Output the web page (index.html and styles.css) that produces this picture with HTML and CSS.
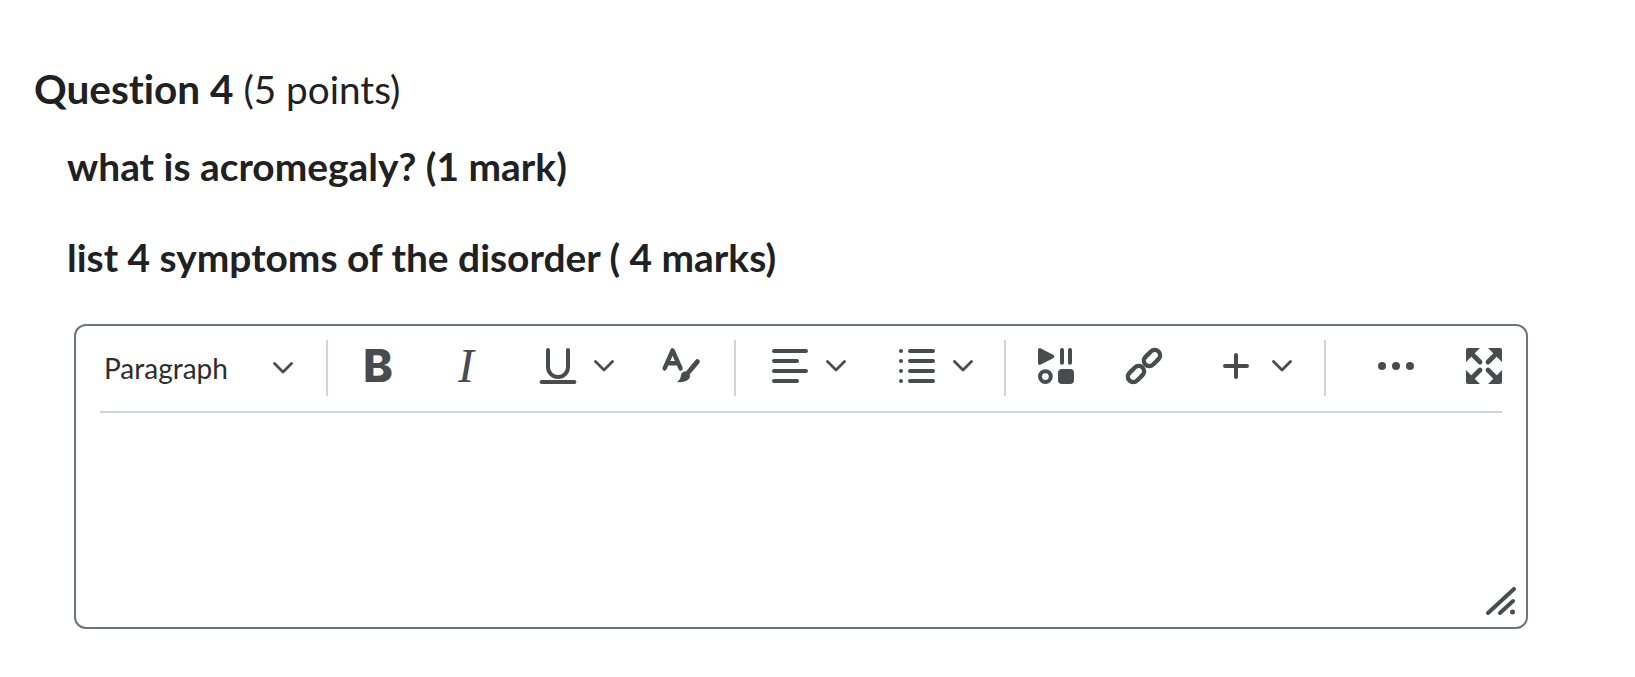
FILE: index.html
```html
<!DOCTYPE html>
<html lang="en">

<head>
    <meta charset="UTF-8">
    <title>Question 4</title>
    <link rel="stylesheet" href="styles.css">
</head>

<body>
    <h2 class="qTitle">Question 4 <span class="qPoints">(5 points)</span></h2>

    <div class="qBody">
        <p class="qText">what is acromegaly? (1 mark)</p>
        <p class="qText">list 4 symptoms of the disorder ( 4 marks)</p>
    </div>

    <div class="editor">
        <div class="toolbar">
            <div class="format">
                <span>Paragraph</span>
                <svg class="chev" viewBox="0 0 20 12"><path d="M1.5 1.5 10 10l8.5-8.5" /></svg>
            </div>
            <span class="sep"></span>

            <div class="tool"><span class="boldMark">B</span></div>
            <div class="tool"><span class="italicMark">I</span></div>
            <div class="tool tool-menu">
                <svg class="icon" viewBox="0 0 18 18"><path class="line" d="M4 1v8.5a5 5 0 0 0 10 0V1M0.8 17h16.4" /></svg>
                <svg class="chev" viewBox="0 0 20 12"><path d="M1.5 1.5 10 10l8.5-8.5" /></svg>
            </div>
            <div class="tool">
                <svg class="icon" viewBox="0 0 18 18">
                    <path class="line brushA" d="M.8 10.200 4.800 1.200l4 9M2.200 7.600h5.200" />
                    <path class="line heavy" d="M17.200 6.800 12 13" />
                    <path class="solid" d="M10 12c1-.4 2.200-.2 3 .7.800 1 .6 2.300-.3 3.100-1.300 1.100-3.300 1.500-5.800 1.300 1.400-.9 1.900-1.900 2-3.100.1-.9.500-1.600 1.100-2z" />
                </svg>
            </div>
            <span class="sep"></span>

            <div class="tool tool-menu">
                <svg class="icon" viewBox="0 0 18 18"><path class="line" d="M1 1.500h16M1 6.500h11.500M1 11.500h16M1 16.500h11.500" /></svg>
                <svg class="chev" viewBox="0 0 20 12"><path d="M1.5 1.5 10 10l8.5-8.500" /></svg>
            </div>
            <div class="tool tool-menu tool-list">
                <svg class="icon" viewBox="0 0 18 18">
                    <path class="line" d="M5.500 1.500h11.500M5.500 6.500h11.500M5.500 11.500h11.500M5.500 16.500h11.500" />
                    <g class="solid"><circle cx="1" cy="1.500" r="1" /><circle cx="1" cy="6.500" r="1" /><circle cx="1" cy="11.500" r="1" /><circle cx="1" cy="16.500" r="1" /></g>
                </svg>
                <svg class="chev" viewBox="0 0 20 12"><path d="M1.5 1.5 10 10l8.500-8.500" /></svg>
            </div>
            <span class="sep"></span>

            <div class="tool">
                <svg class="icon" viewBox="0 0 18 18">
                    <path class="solid" d="M0 1c0-.8.800-1.200 1.400-.8l6.200 3.200c.7.400.7 1.300 0 1.700L1.400 8.300C.8 8.700 0 8.300 0 7.500z" />
                    <rect class="solid" x="11" y="0" width="2" height="8.400" rx="1" />
                    <rect class="solid" x="15" y="0" width="2" height="8.400" rx="1" />
                    <circle class="ring" cx="3.700" cy="14.300" r="2.700" />
                    <rect class="solid" x="10" y="10.500" width="8" height="7.500" rx="2" />
                </svg>
            </div>
            <div class="tool">
                <svg class="icon" viewBox="0 0 18 18">
                    <rect class="ring ring-link" x="8.400" y="2.300" width="9.200" height="5.400" rx="2.700" transform="rotate(-45 13 5)" />
                    <rect class="ring ring-link" x=".4" y="10.300" width="9.200" height="5.400" rx="2.700" transform="rotate(-45 5 13)" />
                </svg>
            </div>
            <div class="tool tool-menu">
                <svg class="icon" viewBox="0 0 18 18"><path class="line" d="M9 3.500v11M3.500 9h11" /></svg>
                <svg class="chev" viewBox="0 0 20 12"><path d="M1.5 1.5 10 10l8.500-8.500" /></svg>
            </div>
            <span class="sep"></span>

            <div class="tool tool-dots">
                <svg class="icon" viewBox="0 0 18 18">
                    <g class="solid"><circle cx="2" cy="9" r="2" /><circle cx="9" cy="9" r="2" /><circle cx="16" cy="9" r="2" /></g>
                </svg>
            </div>
            <div class="tool tool-end">
                <svg class="icon" viewBox="0 0 18 18">
                    <path class="solid" d="M0 1C0 .4.400 0 1 0h6L0 7zM18 1c0-.6-.4-1-1-1h-6l7 7zM0 17c0 .6.400 1 1 1h6l-7-7zM18 17c0 .6-.4 1-1 1h-6l7-7z" />
                    <path class="line heavy" d="M3 3l4 4M15 3l-4 4M3 15l4-4M15 15l-4-4" />
                </svg>
            </div>
        </div>

        <div class="editArea"></div>

        <svg class="resize" viewBox="0 0 30 28">
            <path d="M2 26 28 2M14 26 27 14" />
            <circle cx="26.500" cy="25" r="2.500" />
        </svg>
    </div>
</body>

</html>
```

FILE: styles.css
```css
body {
    margin: 0;
    padding: 0;
    background-color: white;
    color: rgb(32, 33, 34);
    font-family: Lato, "Noto Sans", sans-serif;
    font-variant-ligatures: none;
}

.qTitle {
    margin: 0;
    padding: 65px 0 0 34px;
    font-size: 40.5px;
    line-height: 48px;
    font-weight: 700;
}

.qPoints {
    font-size: 38.7px;
    font-weight: 400;
}

.qBody {
    padding: 29px 0 0 67px;
}

.qText {
    margin: 0 0 43px 0;
    font-size: 38.9px;
    line-height: 48px;
    font-weight: 700;
}

.editor {
    position: relative;
    box-sizing: border-box;
    width: 1454px;
    height: 305px;
    margin: 0 0 0 74px;
    border: 2px solid rgb(110, 116, 119);
    border-radius: 12px;
}

.toolbar {
    display: flex;
    align-items: center;
    height: 85px;
    margin: 0 24px;
    border-bottom: 2px solid rgb(205, 213, 220);
}

.format {
    display: flex;
    align-items: center;
    justify-content: space-between;
    box-sizing: border-box;
    width: 218px;
    height: 40px;
    margin-top: -2px;
    padding: 0 24px 0 4px;
    font-size: 28px;
    color: rgb(44, 46, 48);
}

.sep {
    flex: none;
    width: 2px;
    height: 56px;
    margin: -2px 6px 0 9px;
    background-color: rgb(205, 213, 220);
}

.tool {
    display: flex;
    align-items: center;
    justify-content: center;
    flex: none;
    box-sizing: border-box;
    width: 88px;
    height: 36px;
    margin-top: -6px;
}

.tool-menu {
    justify-content: flex-start;
    gap: 18px;
    width: 127px;
    padding-left: 30px;
}

.tool-list {
    width: 126px;
}

.tool-dots {
    width: 108px;
    padding-left: 20px;
}

.tool-end {
    justify-content: flex-end;
    width: 62px;
}

.icon {
    flex: none;
    width: 36px;
    height: 36px;
    overflow: visible;
}

.line {
    fill: none;
    stroke: rgb(73, 76, 78);
    stroke-width: 2;
    stroke-linecap: round;
    stroke-linejoin: round;
}

.heavy {
    stroke-width: 2.4;
}

.brushA {
    stroke-width: 2.2;
}

.ring {
    fill: none;
    stroke: rgb(73, 76, 78);
    stroke-width: 2;
}

.ring-link {
    stroke-width: 2.2;
}

.solid {
    fill: rgb(73, 76, 78);
}

.chev {
    flex: none;
    width: 20px;
    height: 12px;
    fill: none;
    stroke: rgb(73, 76, 78);
    stroke-width: 2.8;
    stroke-linecap: round;
    stroke-linejoin: round;
}

.boldMark {
    font-family: Inter, "Liberation Sans", sans-serif;
    font-size: 45px;
    font-weight: 800;
    line-height: 36px;
    color: rgb(73, 76, 78);
}

.italicMark {
    font-family: "Liberation Serif", serif;
    font-style: italic;
    font-size: 48px;
    line-height: 36px;
    color: rgb(73, 76, 78);
}

.editArea {
    height: 213px;
}

.resize {
    position: absolute;
    right: 10px;
    bottom: 12px;
    width: 30px;
    height: 28px;
    fill: rgb(73, 76, 78);
    stroke: rgb(73, 76, 78);
    stroke-width: 4;
    stroke-linecap: round;
}

.resize circle {
    stroke: none;
}
```
